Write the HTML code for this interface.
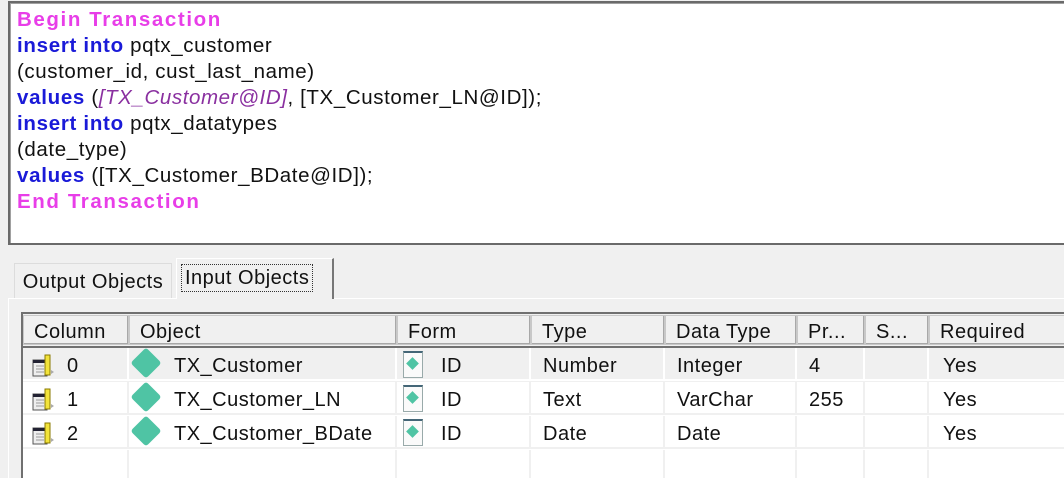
<!DOCTYPE html>
<html><head><style>
html,body{margin:0;width:1064px;height:478px;overflow:hidden}
body{background:#f0f0f0;position:relative;font-family:"Liberation Sans",sans-serif;color:#111}
.ed{position:absolute;left:8px;top:1px;width:1070px;height:240px;border:2px solid #6a6a6a;border-right:none;background:#fff;box-shadow:inset 1px 1px 0 #a0a0a0}
.code{position:absolute;left:17px;top:7px;font-size:20.5px;line-height:26px;white-space:pre;letter-spacing:0.6px}
.pk{color:#e83ee8;font-weight:bold;letter-spacing:1.6px}
.bl{color:#1a1ad8;font-weight:bold;letter-spacing:0.7px}
.it{color:#8a30a0;font-style:italic}
.tab{position:absolute;font-size:20px;letter-spacing:0.5px}
.t1{left:14px;top:263px;width:156px;height:34px;border:1px solid #dcdcdc;border-bottom:none;background:#f0f0f0;line-height:36px;text-align:center}
.t2{left:176px;top:258px;width:155px;height:40px;border-top:1px solid #fff;border-left:1px solid #fff;border-right:2px solid #777;background:#f0f0f0}
.t2 span{position:absolute;left:4px;top:5px;border:1px dotted #333;padding:0 3px;line-height:26px;white-space:nowrap}
.panel{position:absolute;left:8px;top:298px;width:1070px;height:200px;border-top:1px solid #fff;border-left:1px solid #fff}
.tbl{position:absolute;left:21px;top:312px;width:1060px;height:180px;border:2px solid #707070;border-right:none;background:#fff}
.hd{position:absolute;top:0;height:32px;border-bottom:2px solid #707070;background:#f0f0f0;width:100%}
.hc{position:absolute;top:1px;height:30px;border:1px solid #c8c8c8;box-shadow:inset -1px -1px 0 #a8a8a8;font-size:20px;line-height:32px;padding-left:10px;box-sizing:border-box;letter-spacing:0.5px;white-space:nowrap}
.row{position:absolute;left:0;width:100%;height:34px}
.c{position:absolute;top:0;height:33px;font-size:20px;line-height:36px;box-sizing:border-box;border-right:2px solid #f0f0f0;border-bottom:2px solid #f0f0f0;letter-spacing:0.5px;white-space:nowrap}
.dia{position:absolute;left:6px;top:4px;width:22px;height:22px;background:#4fc4a4;transform:rotate(45deg);border-radius:3px}
.fi{position:absolute;left:6px;top:3px;width:18px;height:24px;border:1px solid #9aa;border-top:2px solid #467;background:#fafafa}
.fi:after{content:"";position:absolute;left:4px;top:6px;width:9px;height:9px;background:#4fc4a4;transform:rotate(45deg)}
</style></head><body>
<div class="ed"></div>
<div class="code"><span class="pk">Begin Transaction</span>
<span class="bl">insert into</span> pqtx_customer
(customer_id, cust_last_name)
<span class="bl">values</span> (<span class="it">[TX_Customer@ID]</span>, [TX_Customer_LN@ID]);
<span class="bl">insert into</span> pqtx_datatypes
(date_type)
<span class="bl">values</span> ([TX_Customer_BDate@ID]);
<span class="pk">End Transaction</span></div>

<div class="panel"></div>
<div class="tab t1">Output Objects</div>
<div class="tab t2"><span>Input Objects</span></div>

<div class="tbl">
<div class="hd">
<div class="hc" style="left:0;width:106px">Column</div>
<div class="hc" style="left:106px;width:268px">Object</div>
<div class="hc" style="left:374px;width:134px">Form</div>
<div class="hc" style="left:508px;width:134px">Type</div>
<div class="hc" style="left:642px;width:132px">Data Type</div>
<div class="hc" style="left:774px;width:68px">Pr...</div>
<div class="hc" style="left:842px;width:64px">S...</div>
<div class="hc" style="left:906px;width:140px">Required</div>
</div>

<div class="row" style="top:34px;background:#f0f0f0">
<div class="c" style="left:0;width:106px;padding-left:44px;border-color:#fff">
<svg style="position:absolute;left:8px;top:5px" width="32" height="24" viewBox="0 0 32 24"><rect x="2" y="7" width="14" height="16" fill="#eee" stroke="#555"/><rect x="2" y="7" width="14" height="3" fill="#223"/><path d="M5 13h8M5 16h8M5 19h8" stroke="#999"/><path d="M14 2h5v20h-5z" fill="#f2e33a" stroke="#8a7a00"/><path d="M20 17l3 2-3 2z" fill="#aaa"/></svg>0</div>
<div class="c" style="left:106px;width:268px;padding-left:45px;border-color:#fff"><div class="dia"></div>TX_Customer</div>
<div class="c" style="left:374px;width:134px;padding-left:44px;border-color:#fff"><div class="fi"></div>ID</div>
<div class="c" style="left:508px;width:134px;padding-left:12px;border-color:#fff">Number</div>
<div class="c" style="left:642px;width:132px;padding-left:12px;border-color:#fff">Integer</div>
<div class="c" style="left:774px;width:68px;padding-left:12px;border-color:#fff">4</div>
<div class="c" style="left:842px;width:64px;border-color:#fff"></div>
<div class="c" style="left:906px;width:160px;padding-left:14px;border-color:#fff">Yes</div>
</div>

<div class="row" style="top:68px">
<div class="c" style="left:0;width:106px;padding-left:44px">
<svg style="position:absolute;left:8px;top:5px" width="32" height="24" viewBox="0 0 32 24"><rect x="2" y="7" width="14" height="16" fill="#eee" stroke="#555"/><rect x="2" y="7" width="14" height="3" fill="#223"/><path d="M5 13h8M5 16h8M5 19h8" stroke="#999"/><path d="M14 2h5v20h-5z" fill="#f2e33a" stroke="#8a7a00"/><path d="M20 17l3 2-3 2z" fill="#aaa"/></svg>1</div>
<div class="c" style="left:106px;width:268px;padding-left:45px"><div class="dia"></div>TX_Customer_LN</div>
<div class="c" style="left:374px;width:134px;padding-left:44px"><div class="fi"></div>ID</div>
<div class="c" style="left:508px;width:134px;padding-left:12px">Text</div>
<div class="c" style="left:642px;width:132px;padding-left:12px">VarChar</div>
<div class="c" style="left:774px;width:68px;padding-left:12px">255</div>
<div class="c" style="left:842px;width:64px"></div>
<div class="c" style="left:906px;width:160px;padding-left:14px">Yes</div>
</div>

<div class="row" style="top:102px">
<div class="c" style="left:0;width:106px;padding-left:44px">
<svg style="position:absolute;left:8px;top:5px" width="32" height="24" viewBox="0 0 32 24"><rect x="2" y="7" width="14" height="16" fill="#eee" stroke="#555"/><rect x="2" y="7" width="14" height="3" fill="#223"/><path d="M5 13h8M5 16h8M5 19h8" stroke="#999"/><path d="M14 2h5v20h-5z" fill="#f2e33a" stroke="#8a7a00"/><path d="M20 17l3 2-3 2z" fill="#aaa"/></svg>2</div>
<div class="c" style="left:106px;width:268px;padding-left:45px"><div class="dia"></div>TX_Customer_BDate</div>
<div class="c" style="left:374px;width:134px;padding-left:44px"><div class="fi"></div>ID</div>
<div class="c" style="left:508px;width:134px;padding-left:12px">Date</div>
<div class="c" style="left:642px;width:132px;padding-left:12px">Date</div>
<div class="c" style="left:774px;width:68px"></div>
<div class="c" style="left:842px;width:64px"></div>
<div class="c" style="left:906px;width:160px;padding-left:14px">Yes</div>
</div>

<div class="row" style="top:136px">
<div class="c" style="left:0;width:106px;height:40px"></div>
<div class="c" style="left:106px;width:268px;height:40px"></div>
<div class="c" style="left:374px;width:134px;height:40px"></div>
<div class="c" style="left:508px;width:134px;height:40px"></div>
<div class="c" style="left:642px;width:132px;height:40px"></div>
<div class="c" style="left:774px;width:68px;height:40px"></div>
<div class="c" style="left:842px;width:64px;height:40px"></div>
<div class="c" style="left:906px;width:160px;height:40px"></div>
</div>
</div>
</body></html>
